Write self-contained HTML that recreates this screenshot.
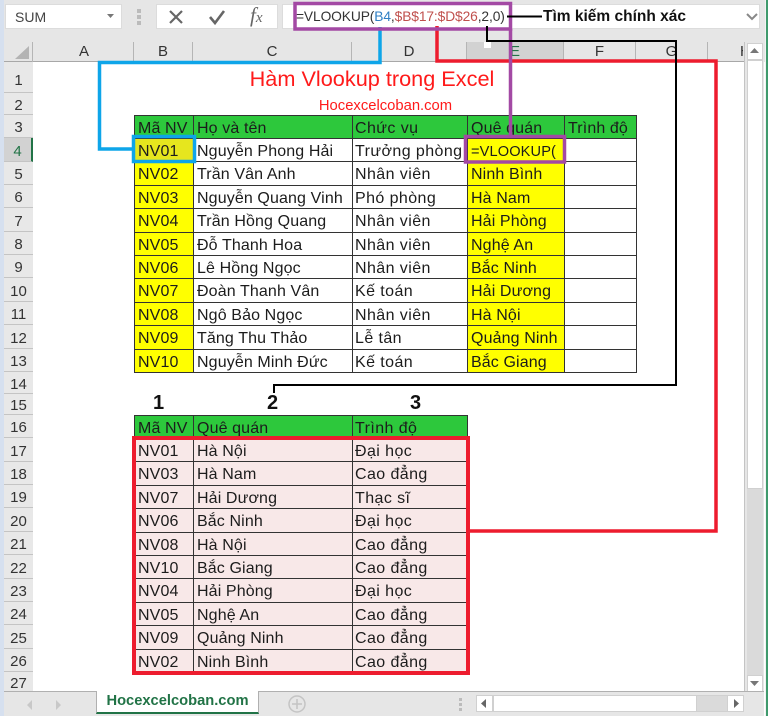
<!DOCTYPE html>
<html><head><meta charset="utf-8"><style>
html,body{margin:0;padding:0;background:#fff}
#p{position:relative;width:768px;height:716px;overflow:hidden;background:#fff;font-family:"Liberation Sans",sans-serif;color:#222;filter:blur(.3px)}
.a{position:absolute;box-sizing:border-box}
.hc{position:absolute;top:42px;height:20px;border-right:1px solid #b5b5b5;text-align:center;font-size:15px;line-height:20px;color:#333;box-sizing:border-box}
.rh{position:absolute;left:4px;width:29px;border-bottom:1px solid #c4c4c4;text-align:center;font-size:15px;color:#333;box-sizing:border-box;background:#e8e8e8;padding-top:1px}
.g{position:absolute;display:grid;border-top:1px solid #333;border-left:1px solid #333;box-sizing:border-box}
.g div{border-right:1px solid #333;border-bottom:1px solid #333;box-sizing:border-box;font-size:16px;line-height:24px;padding:1px 0 0 3px;white-space:nowrap;overflow:hidden;color:#1c1c1c;letter-spacing:.12px}
.g .d{padding-left:2px;letter-spacing:.42px}
.h{background:#2dc83c}.y{background:#ffff00}.p{background:#f8e8e8}
</style></head><body><div id="p">
<div class="a" style="left:0;top:0;width:768px;height:62px;background:#e6e6e6"></div>
<div class="a" style="left:0;top:0;width:4px;height:716px;background:#d6e0ef"></div>
<div class="a" style="right:0;top:0;width:2px;height:716px;background:#3f9a6c"></div>
<div class="a" style="left:765px;top:0;width:1px;height:716px;background:#f2f2f2"></div>

<div class="a" style="left:5px;top:4px;width:117px;height:25px;background:#fff;border:1px solid #dcdcdc;font-size:14px;line-height:24px;padding-left:9px;color:#444">SUM</div>
<svg class="a" style="left:106px;top:13px" width="10" height="6"><path d="M1 1h7l-3.500 4z" fill="#777"/></svg>
<div class="a" style="left:137px;top:9px;width:4px;height:4px;background:#bbb;box-shadow:0 6px #bbb,0 12px #bbb"></div>
<div class="a" style="left:156px;top:4px;width:122px;height:25px;background:#fff;border:1px solid #dcdcdc"></div>
<svg class="a" style="left:168px;top:6px" width="100" height="22">
<path d="M2 5L14 17M14 5L2 17" stroke="#666" stroke-width="2.200" fill="none"/>
<path d="M42 11l5 6 9-12" stroke="#666" stroke-width="2.600" fill="none"/>
</svg>
<div class="a" style="left:250px;top:3px;font:italic 21px 'Liberation Serif',serif;color:#666">f<span style="font-size:15px">x</span></div>
<div class="a" style="left:282px;top:4px;width:478px;height:25px;background:#fff;border:1px solid #dcdcdc"></div>
<div class="a" style="left:296px;top:5px;font-size:13.800px;line-height:23px;white-space:nowrap;color:#333;letter-spacing:-.12px">=VLOOKUP(<span style="color:#2f7fc4">B4</span>,<span style="color:#c0504d">$B$17:$D$26</span>,2,0)</div>
<div class="a" style="left:543px;top:7px;font-size:15.500px;font-weight:bold;line-height:20px;color:#111;white-space:nowrap">Tìm kiếm chính xác</div>
<svg class="a" style="left:746px;top:13px" width="12" height="8"><path d="M1 1l5 5 5-5" stroke="#888" stroke-width="2" fill="none"/></svg>

<div class="a" style="left:4px;top:42px;width:760px;height:20px;background:#e6e6e6;border-bottom:1px solid #a8a8a8"></div>
<div class="a" style="left:4px;top:42px;width:29px;height:20px;border-right:1px solid #b5b5b5"></div>
<svg class="a" style="left:14px;top:46px" width="17" height="14"><path d="M15 0V13H1z" fill="#b4b4b4"/></svg>
<div class="hc" style="left:33px;width:101px;padding-left:2px">A</div>
<div class="hc" style="left:134px;width:59px">B</div>
<div class="hc" style="left:193px;width:159px">C</div>
<div class="hc" style="left:352px;width:115px">D</div>
<div class="hc" style="left:467px;width:97px;background:#d2d2d2;color:#217346">E</div>
<div class="hc" style="left:564px;width:72px">F</div>
<div class="hc" style="left:636px;width:72px">G</div>
<div class="hc" style="left:708px;width:35px;border-right:none;text-align:left;overflow:hidden;padding-left:32px">H</div>

<div class="rh" style="top:62px;height:31px;line-height:35px">1</div>
<div class="rh" style="top:93px;height:22px;line-height:23px">2</div>
<div class="rh" style="top:115px;height:23px;line-height:24px">3</div>
<div class="rh" style="top:138px;height:24px;line-height:25px;background:#d2d2d2;color:#217346;border-right:2px solid #217346">4</div>
<div class="rh" style="top:162px;height:23px;line-height:24px">5</div>
<div class="rh" style="top:185px;height:23px;line-height:24px">6</div>
<div class="rh" style="top:208px;height:24px;line-height:25px">7</div>
<div class="rh" style="top:232px;height:23px;line-height:24px">8</div>
<div class="rh" style="top:255px;height:23px;line-height:24px">9</div>
<div class="rh" style="top:278px;height:24px;line-height:25px">10</div>
<div class="rh" style="top:302px;height:23px;line-height:24px">11</div>
<div class="rh" style="top:325px;height:24px;line-height:25px">12</div>
<div class="rh" style="top:349px;height:23px;line-height:24px">13</div>
<div class="rh" style="top:372px;height:22px;line-height:23px">14</div>
<div class="rh" style="top:394px;height:21px;line-height:22px">15</div>
<div class="rh" style="top:415px;height:23px;line-height:24px">16</div>
<div class="rh" style="top:438px;height:24px;line-height:25px">17</div>
<div class="rh" style="top:462px;height:23px;line-height:24px">18</div>
<div class="rh" style="top:485px;height:23px;line-height:24px">19</div>
<div class="rh" style="top:508px;height:24px;line-height:25px">20</div>
<div class="rh" style="top:532px;height:23px;line-height:24px">21</div>
<div class="rh" style="top:555px;height:24px;line-height:25px">22</div>
<div class="rh" style="top:579px;height:23px;line-height:24px">23</div>
<div class="rh" style="top:602px;height:23px;line-height:24px">24</div>
<div class="rh" style="top:625px;height:24px;line-height:25px">25</div>
<div class="rh" style="top:649px;height:23px;line-height:24px">26</div>
<div class="rh" style="top:672px;height:20px;line-height:21px;border-bottom:none">27</div>

<div class="a" style="left:193px;top:65px;width:358px;text-align:center;font-size:21.700px;line-height:28px;color:#ff1a1a;white-space:nowrap">Hàm Vlookup trong Excel</div>
<div class="a" style="left:193px;top:96px;width:385px;text-align:center;font-size:14.800px;line-height:20px;color:#ff1a1a;white-space:nowrap">Hocexcelcoban.com</div>

<div class="g" style="left:134px;top:115px;width:503px;height:258px;grid-template-columns:59px 159px 115px 97px 72px;grid-template-rows:23px repeat(10,23.400px)">
<div class="h">Mã NV</div><div class="h">Họ và tên</div><div class="h d">Chức vụ</div><div class="h">Quê quán</div><div class="h">Trình độ</div>
<div style="background:#e6e61e">NV01</div><div>Nguyễn Phong Hải</div><div class="d">Trưởng phòng</div><div class="y" style="font-size:14.600px">=VLOOKUP(</div><div></div>
<div class="y">NV02</div><div>Trần Vân Anh</div><div class="d">Nhân viên</div><div class="y">Ninh Bình</div><div></div>
<div class="y">NV03</div><div>Nguyễn Quang Vinh</div><div class="d">Phó phòng</div><div class="y">Hà Nam</div><div></div>
<div class="y">NV04</div><div>Trần Hồng Quang</div><div class="d">Nhân viên</div><div class="y">Hải Phòng</div><div></div>
<div class="y">NV05</div><div>Đỗ Thanh Hoa</div><div class="d">Nhân viên</div><div class="y">Nghệ An</div><div></div>
<div class="y">NV06</div><div>Lê Hồng Ngọc</div><div class="d">Nhân viên</div><div class="y">Bắc Ninh</div><div></div>
<div class="y">NV07</div><div>Đoàn Thanh Vân</div><div class="d">Kế toán</div><div class="y">Hải Dương</div><div></div>
<div class="y">NV08</div><div>Ngô Bảo Ngọc</div><div class="d">Nhân viên</div><div class="y">Hà Nội</div><div></div>
<div class="y">NV09</div><div>Tăng Thu Thảo</div><div class="d">Lễ tân</div><div class="y">Quảng Ninh</div><div></div>
<div class="y">NV10</div><div>Nguyễn Minh Đức</div><div class="d">Kế toán</div><div class="y">Bắc Giang</div><div></div>
</div>

<div class="a" style="left:153px;top:390px;font-size:20px;font-weight:bold;line-height:26px;color:#111">1</div>
<div class="a" style="left:267px;top:390px;font-size:20px;font-weight:bold;line-height:26px;color:#111">2</div>
<div class="a" style="left:410px;top:390px;font-size:20px;font-weight:bold;line-height:26px;color:#111">3</div>

<div class="g" style="left:134px;top:415px;width:334px;height:258px;grid-template-columns:59px 159px 115px;grid-template-rows:23px repeat(10,23.400px)">
<div class="h">Mã NV</div><div class="h">Quê quán</div><div class="h d">Trình độ</div>
<div class="p">NV01</div><div class="p">Hà Nội</div><div class="p d">Đại học</div>
<div class="p">NV03</div><div class="p">Hà Nam</div><div class="p d">Cao đẳng</div>
<div class="p">NV07</div><div class="p">Hải Dương</div><div class="p d">Thạc sĩ</div>
<div class="p">NV06</div><div class="p">Bắc Ninh</div><div class="p d">Đại học</div>
<div class="p">NV08</div><div class="p">Hà Nội</div><div class="p d">Cao đẳng</div>
<div class="p">NV10</div><div class="p">Bắc Giang</div><div class="p d">Cao đẳng</div>
<div class="p">NV04</div><div class="p">Hải Phòng</div><div class="p d">Đại học</div>
<div class="p">NV05</div><div class="p">Nghệ An</div><div class="p d">Cao đẳng</div>
<div class="p">NV09</div><div class="p">Quảng Ninh</div><div class="p d">Cao đẳng</div>
<div class="p">NV02</div><div class="p">Ninh Bình</div><div class="p d">Cao đẳng</div>
</div>

<div class="a" style="left:744px;top:42px;width:20px;height:650px;background:#e6e6e6;border-left:1px solid #c4c4c4"></div>
<div class="a" style="left:747px;top:43px;width:16px;height:17px;background:#fff;border:1px solid #d0d0d0"></div>
<svg class="a" style="left:750px;top:48px" width="10" height="6"><path d="M0 5h9L4.500 0z" fill="#777"/></svg>
<div class="a" style="left:747px;top:60px;width:16px;height:429px;background:#fff;border:1px solid #d0d0d0"></div>
<div class="a" style="left:747px;top:489px;width:16px;height:186px;background:#dadada"></div>
<div class="a" style="left:747px;top:675px;width:16px;height:17px;background:#fff;border:1px solid #d0d0d0"></div>
<svg class="a" style="left:750px;top:681px" width="10" height="6"><path d="M0 0h9L4.500 5z" fill="#777"/></svg>

<div class="a" style="left:4px;top:691px;width:760px;height:25px;background:#e6e6e6;border-top:1px solid #b0b0b0"></div>
<svg class="a" style="left:26px;top:699px" width="36" height="12"><path d="M6 1L1 6l5 5zM30 1l5 5-5 5z" fill="#c8c8c8"/></svg>
<div class="a" style="left:96px;top:691px;width:163px;height:23px;background:#fff;border-left:1px solid #b0b0b0;border-right:1px solid #b0b0b0;border-bottom:2px solid #217346;text-align:center;font-size:14.700px;font-weight:bold;line-height:20px;color:#217346;white-space:nowrap">Hocexcelcoban.com</div>
<svg class="a" style="left:288px;top:695px" width="18" height="18"><circle cx="9" cy="9" r="8" stroke="#c4c4c4" stroke-width="1.500" fill="none"/><path d="M9 4v10M4 9h10" stroke="#c4c4c4" stroke-width="1.500"/></svg>
<div class="a" style="left:459px;top:698px;width:3px;height:3px;background:#bbb;box-shadow:0 5px #bbb,0 10px #bbb"></div>
<div class="a" style="left:476px;top:695px;width:268px;height:17px;background:#dadada;border:1px solid #d0d0d0"></div>
<div class="a" style="left:476px;top:695px;width:17px;height:17px;background:#fff;border:1px solid #d0d0d0"></div>
<svg class="a" style="left:480px;top:699px" width="8" height="10"><path d="M6 0v9L1 4.500z" fill="#666"/></svg>
<div class="a" style="left:493px;top:695px;width:204px;height:17px;background:#fff;border:1px solid #d0d0d0"></div>
<div class="a" style="left:727px;top:695px;width:17px;height:17px;background:#fff;border:1px solid #d0d0d0"></div>
<svg class="a" style="left:733px;top:699px" width="8" height="10"><path d="M1 0v9l5-4.500z" fill="#666"/></svg>

<svg class="a" style="left:0;top:0" width="768" height="716" fill="none">
<path d="M380 27V62.500H99.500V149H134" stroke="#0ea5e9" stroke-width="3.500"/>
<rect x="133.500" y="136.500" width="61" height="25" stroke="#0ea5e9" stroke-width="3.500"/>
<path d="M437 26V61H716V531H468" stroke="#ed1c2e" stroke-width="3.500"/>
<rect x="134" y="438" width="334" height="235" stroke="#ed1c2e" stroke-width="4"/>
<rect x="295" y="3.500" width="215.500" height="25.500" stroke="#a349a4" stroke-width="3.500"/>
<path d="M510.500 29V137" stroke="#a349a4" stroke-width="3.500"/>
<rect x="465.500" y="136.500" width="99" height="25.500" stroke="#a349a4" stroke-width="3.500"/>
<path d="M507 16.500H542" stroke="#000" stroke-width="2"/>
<path d="M487 26V41H676V385H274V393" stroke="#000" stroke-width="2"/>
<rect x="484" y="42" width="7" height="6" fill="#fff"/>
</svg>
</div></body></html>
